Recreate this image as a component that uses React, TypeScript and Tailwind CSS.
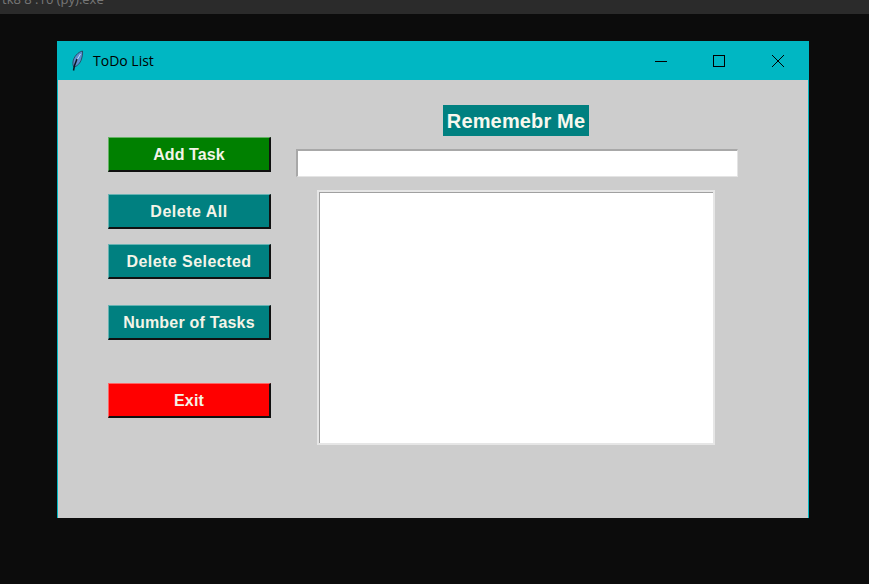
const buttons = [
  { label: "Add Task", color: "bg-[#008000]", top: "mt-[57px]", spacing: "tracking-[0.1px]" },
  { label: "Delete All", color: "bg-[#008080]", top: "mt-[22px]", spacing: "tracking-[0.5px]" },
  { label: "Delete Selected", color: "bg-[#008080]", top: "mt-[15px]", spacing: "tracking-[0.45px]" },
  { label: "Number of Tasks", color: "bg-[#008080]", top: "mt-[26px]", spacing: "tracking-[0.2px]" },
  { label: "Exit", color: "bg-[#ff0000]", top: "mt-[43px]", spacing: "tracking-[0.2px]" },
];

function Feather() {
  return (
    <svg width="14" height="22" viewBox="0 0 14 22">
      <path d="M11.500 1C7 2 2.500 7 2 12c-.2 2 0 3.500.8 5C6 16.500 9.500 13 10.500 9c.7-2.500 1.300-5 1-8z" fill="#5b8fd0" stroke="#26384e" strokeWidth=".8" />
      <path d="M9.500 4 5 11.500" fill="none" stroke="#c8dcf4" strokeWidth="1" />
      <path d="M6 9 3.500 15.500 2.500 20.500" fill="none" stroke="#0c1420" strokeWidth="1.500" />
    </svg>
  );
}

function TaskButton({ label, color, top, spacing }: (typeof buttons)[number]) {
  return (
    <button
      className={`${top} ${color} ${spacing} box-border flex h-[35px] w-[163px] items-center justify-center border border-b-2 border-r-2 border-t-white/40 border-l-white/40 border-b-[#101010] border-r-[#101010] pt-[1px] text-[16px] font-bold text-[#f4f4e8]`}
    >
      {label}
    </button>
  );
}

export default function App() {
  return (
    <div className="h-[584px] w-[869px] overflow-hidden bg-[#0c0c0c] font-['Liberation_Sans',Arial,sans-serif]">
      <div className="h-[14px] overflow-hidden bg-[#2b2b2b] pl-[2px] font-['Open_Sans',sans-serif] text-[13px] leading-[4px] text-[#777777]">
        <div className="-mt-[3px]">tk8 8 .10 (py).exe</div>
      </div>
      <div className="ml-[57px] mt-[27px] w-[752px] border-r border-[#00b7c3]">
        <div className="flex h-[39px] items-center bg-[#00b7c3] pl-[14px] font-['Open_Sans',sans-serif] text-[14px]">
          <Feather />
          <span className="ml-[8px] flex-1 text-black">ToDo List</span>
          <svg width="153" height="39" viewBox="0 0 153 39" fill="none" stroke="#000" strokeWidth="1" shapeRendering="crispEdges">
            <path d="M0 20.500h12" />
            <rect x="58.500" y="14.500" width="11" height="11" />
            <path d="M117 14 129 26M129 14 117 26" shapeRendering="auto" />
          </svg>
        </div>
        <div className="flex h-[438px] border-l border-[#00b7c3] bg-[#cdcdcd] pl-[50px]">
          <div className="flex flex-col">
            {buttons.map((b) => (
              <TaskButton key={b.label} {...b} />
            ))}
          </div>
          <div className="ml-[25px] flex w-[442px] flex-col items-start">
            <div className="ml-[147px] mt-[25px] flex h-[31px] w-[146px] items-center justify-center bg-[#008080] text-[20px] font-bold tracking-[0.15px] text-[#f8f8ee]">
              Rememebr Me
            </div>
            <input className="mt-[13px] box-border h-[28px] w-[442px] border-b border-l-2 border-r border-t-2 border-b-[#e4e4e4] border-l-[#a8a8a8] border-r-[#e4e4e4] border-t-[#a8a8a8] bg-white outline-none" />
            <div className="ml-[21px] mt-[13px] box-border h-[255px] w-[398px] border-2 border-[#e6e6e6] bg-white shadow-[inset_1px_1px_0_#a0a0a0]" />
          </div>
        </div>
      </div>
    </div>
  );
}
